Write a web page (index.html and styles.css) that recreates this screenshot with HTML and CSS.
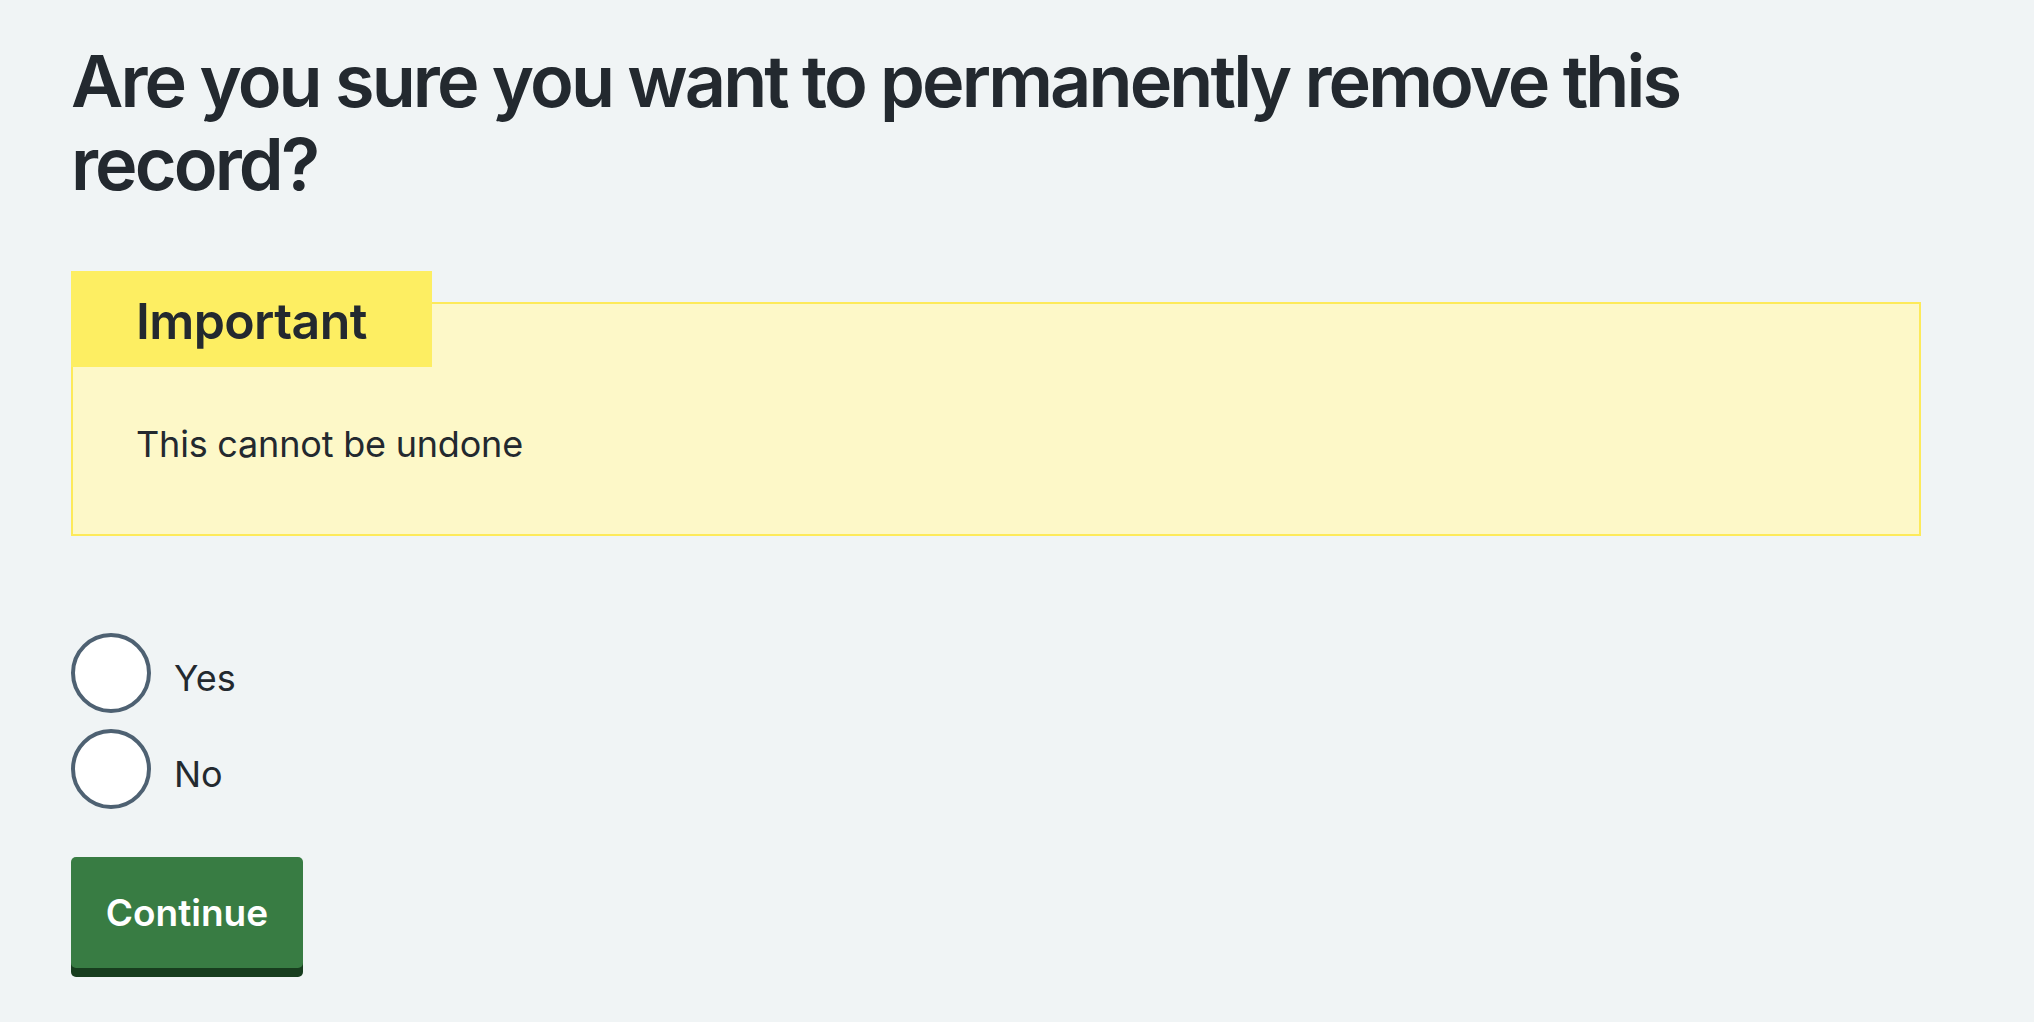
FILE: index.html
```html
<!DOCTYPE html>
<html lang="en">
<head>
<meta charset="utf-8">
<title>Remove record</title>
<link rel="stylesheet" href="styles.css">
</head>
<body>
<main class="page">
  <h1 class="title">Are you sure you want to permanently remove this record?</h1>

  <section class="notice">
    <h2 class="notice-tab">Important</h2>
    <p class="notice-text">This cannot be undone</p>
  </section>

  <form class="form">
    <div class="radios">
      <label class="radio">
        <input type="radio" name="confirm" value="yes" class="radio-input">
        <span class="radio-label">Yes</span>
      </label>
      <label class="radio">
        <input type="radio" name="confirm" value="no" class="radio-input">
        <span class="radio-label">No</span>
      </label>
    </div>
    <button type="button" class="button">Continue</button>
  </form>
</main>
</body>
</html>
```

FILE: styles.css
```css
* { box-sizing: border-box; }

html, body {
  margin: 0;
  padding: 0;
  background: #f0f4f5;
}

body {
  font-family: Inter, "Noto Sans", "Liberation Sans", sans-serif;
  color: #23292f;
}

.page {
  padding: 39px 113px 40px 71px;
}

.title {
  margin: 0;
  max-width: 1760px;
  font-size: 72px;
  line-height: 83px;
  font-weight: 600;
  letter-spacing: -2.9px;
}

.notice {
  position: relative;
  margin-top: 97px;
  background: #fdf8c8;
  border: 2px solid #fdea5a;
  padding: 113px 63px 63px 63px;
}

.notice-tab {
  position: absolute;
  top: -33px;
  left: -2px;
  margin: 0;
  width: 361px;
  height: 96px;
  padding: 2px 0 0 65px;
  background: #fdee62;
  font-size: 50px;
  line-height: 96px;
  font-weight: 600;
  letter-spacing: -0.6px;
}

.notice-text {
  margin: 0;
  font-size: 36px;
  line-height: 54px;
  font-weight: 400;
  letter-spacing: -0.2px;
}

.form {
  margin-top: 97px;
}

.radios {
  display: flex;
  flex-direction: column;
  gap: 16px;
}

.radio {
  display: flex;
  align-items: center;
  gap: 23px;
  height: 80px;
  cursor: pointer;
}

.radio-input {
  appearance: none;
  -webkit-appearance: none;
  margin: 0;
  width: 80px;
  height: 80px;
  border: 4px solid #4e6172;
  border-radius: 50%;
  background: #ffffff;
  flex: none;
}

.radio-label {
  font-size: 36px;
  line-height: 54px;
  padding-top: 10px;
}

.button {
  margin-top: 48px;
  display: block;
  width: 232px;
  height: 111px;
  border: 0;
  border-radius: 5px;
  background: #387c43;
  box-shadow: 0 9px 0 #173d1e;
  color: #ffffff;
  font-family: inherit;
  font-size: 37px;
  font-weight: 600;
  padding: 0;
  cursor: pointer;
}
```
